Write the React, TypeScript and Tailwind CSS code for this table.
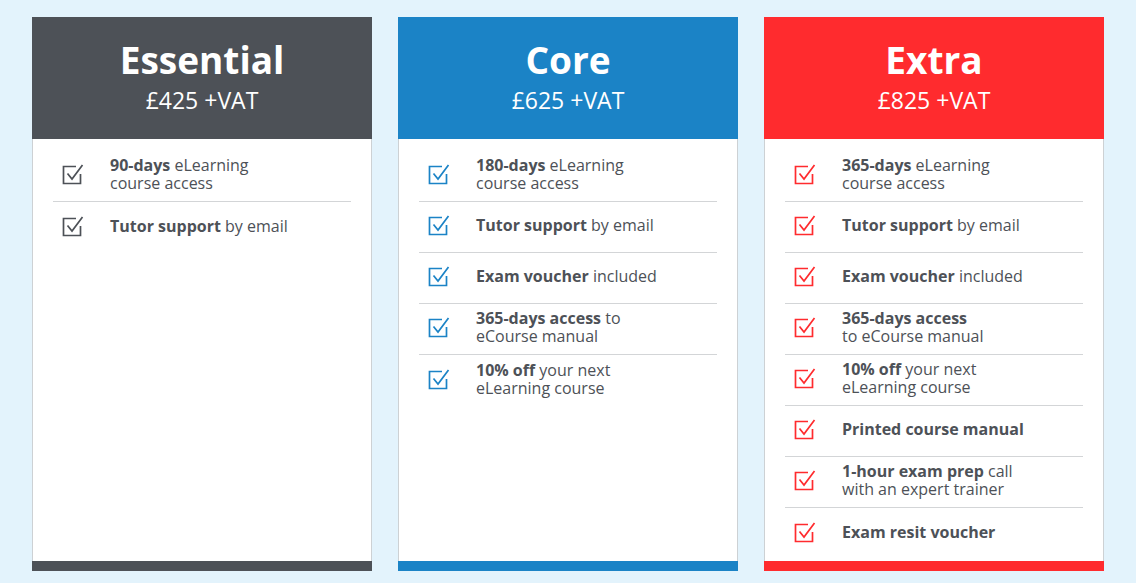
import React from "react";

type Item = { b: string; r: string; br?: boolean };
type Plan = { name: string; price: string; color: string; items: Item[] };

const plans: Plan[] = [
  {
    name: "Essential",
    price: "£425 +VAT",
    color: "#4d5157",
    items: [
      { b: "90-days", r: " eLearning", br: true },
      { b: "Tutor support", r: " by email" },
    ],
  },
  {
    name: "Core",
    price: "£625 +VAT",
    color: "#1b83c6",
    items: [
      { b: "180-days", r: " eLearning", br: true },
      { b: "Tutor support", r: " by email" },
      { b: "Exam voucher", r: " included" },
      { b: "365-days access", r: " to" },
      { b: "10% off", r: " your next" },
    ],
  },
  {
    name: "Extra",
    price: "£825 +VAT",
    color: "#ff2b2e",
    items: [
      { b: "365-days", r: " eLearning", br: true },
      { b: "Tutor support", r: " by email" },
      { b: "Exam voucher", r: " included" },
      { b: "365-days access", r: "" },
      { b: "10% off", r: " your next" },
      { b: "Printed course manual", r: "" },
      { b: "1-hour exam prep", r: " call" },
      { b: "Exam resit voucher", r: "" },
    ],
  },
];

// second lines, keyed by plan + index
const second: Record<string, string> = {
  "Essential-0": "course access",
  "Core-0": "course access",
  "Core-3": "eCourse manual",
  "Core-4": "eLearning course",
  "Extra-0": "course access",
  "Extra-3": "to eCourse manual",
  "Extra-4": "eLearning course",
  "Extra-6": "with an expert trainer",
};

function CheckIcon({ color }: { color: string }) {
  return (
    <svg width="24" height="24" viewBox="0 0 24 24" fill="none" stroke={color} strokeWidth="1.7">
      <path d="M15 4.5H2.5V21.5H19.5V12" />
      <path d="M6.5 11.5L11 17L21.5 3" />
    </svg>
  );
}

function Card({ plan }: { plan: Plan }) {
  return (
    <div className="flex flex-col w-[340px]">
      <div
        className="h-[122px] flex flex-col items-center text-white"
        style={{ backgroundColor: plan.color }}
      >
        <div className="text-[37px] font-bold leading-none mt-[24px]">{plan.name}</div>
        <div className="text-[23px] leading-none mt-[11px]">{plan.price}</div>
      </div>
      <div className="flex-1 bg-white border-x border-[#cdd1d4] px-5 pt-[12px]">
        {plan.items.map((it, i) => {
          const s = second[`${plan.name}-${i}`];
          return (
            <div
              key={i}
              className={
                "h-[51px] pb-[4px] flex items-center text-[16px] leading-[18px] text-[#4d5157] " +
                (i < plan.items.length - 1 ? "border-b border-[#d3d5d7]" : "")
              }
            >
              <div className="w-[57px] pl-[8px] shrink-0 flex items-center">
                <CheckIcon color={plan.color} />
              </div>
              <div>
                <span className="font-bold">{it.b}</span>
                {it.r}
                {s && (
                  <>
                    <br />
                    {s}
                  </>
                )}
              </div>
            </div>
          );
        })}
      </div>
      <div className="h-[10px]" style={{ backgroundColor: plan.color }} />
    </div>
  );
}

export default function App() {
  return (
    <div
      className="w-[1136px] h-[583px] bg-[#e3f3fc] flex gap-[26px] px-8 pt-[17px] pb-[12px]"
      style={{ fontFamily: '"Open Sans", sans-serif' }}
    >
      {plans.map((p) => (
        <Card key={p.name} plan={p} />
      ))}
    </div>
  );
}
